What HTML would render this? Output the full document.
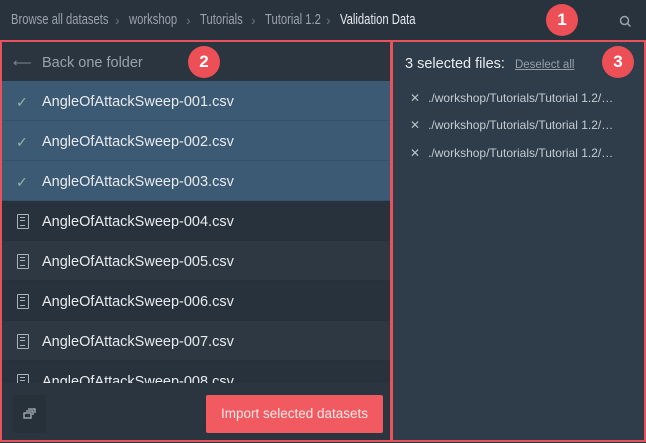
<!DOCTYPE html>
<html><head><meta charset="utf-8"><style>
*{margin:0;padding:0;box-sizing:border-box}
body{width:646px;height:443px;background:#2a343f;font-family:"Liberation Sans",sans-serif;position:relative;overflow:hidden}
.top{position:absolute;left:0;top:0;width:646px;height:40px;background:#29333e;color:#9aa3ac;font-size:15px;line-height:40px;white-space:nowrap}
.top span.t{position:absolute;top:0;transform:scaleX(0.75);transform-origin:left center}
.top .sep{position:absolute;top:0;color:#6c757e;font-size:14px}
.top .cur{color:#e6e9ec}
.badge{position:absolute;width:32px;height:32px;border-radius:50%;background:#ec4f55;color:#fff;font-weight:bold;font-size:17px;text-align:center;line-height:32px}
.left{position:absolute;left:0;top:40px;width:392px;height:402px;border:2px solid #e8525a;background:#2b3540;overflow:hidden}
.right{position:absolute;left:391px;top:40px;width:255px;height:402px;border:2px solid #e8525a;background:#2f3d4a}
.row{height:40px;line-height:42px;font-size:14.5px;color:#e8ebee;padding-left:40px;position:relative;border-bottom:1px solid #26303a}
.row.sel{background:#3c5a73;border-bottom:1px solid #34506a}
.row.d{background:#28323c}
.row.l{background:#2d3843}
.ic{position:absolute;left:15px;top:13px;width:12px;height:15px;border:1.5px solid #aab2ba;border-radius:1px}
.ic:before{content:"";position:absolute;left:2px;top:2px;width:5px;height:7px;border-top:1.5px solid #aab2ba;border-bottom:1.5px solid #aab2ba}
.ic:after{content:"";position:absolute;left:2px;top:5px;width:5px;height:0;border-top:1.5px solid #aab2ba}
.chk{position:absolute;left:14px;top:0;color:#8fb8a6;font-size:14px}
.foot{position:absolute;left:0;top:341px;width:388px;height:59px;background:#2b3540}
.btn{position:absolute;left:204px;top:12px;width:177px;height:38px;background:#f05a60;color:#fbe9ea;font-size:13.5px;text-align:center;line-height:38px;border-radius:2px}
.sq{position:absolute;left:11px;top:12px;width:33px;height:38px;background:#27313a;color:#aab2ba}
.sel-h{color:#e8ebee;font-size:14.5px;position:absolute;left:12px;top:14px}
.sel-h u{color:#97a0a9;font-size:11.5px;margin-left:6px}
.f{position:absolute;left:17px;font-size:12px;color:#c5ccd2;white-space:nowrap}
.f b{font-weight:normal;color:#b8c0c7;margin-right:8px}
</style></head><body>
<div class="top">
<span class="t" style="left:11px">Browse all datasets</span><span class="sep" style="left:115px">›</span>
<span class="t" style="left:129px">workshop</span><span class="sep" style="left:186px">›</span>
<span class="t" style="left:200px">Tutorials</span><span class="sep" style="left:251px">›</span>
<span class="t" style="left:265px">Tutorial 1.2</span><span class="sep" style="left:326px">›</span>
<span class="t cur" style="left:340px">Validation Data</span>
<svg style="position:absolute;left:619px;top:15px" width="13" height="13" viewBox="0 0 13 13"><circle cx="5.5" cy="5.5" r="4" fill="none" stroke="#9aa3ac" stroke-width="1.5"/><path d="M8.5 8.5L11.5 11.5" stroke="#9aa3ac" stroke-width="1.5"/></svg></div>
<div class="badge" style="left:546px;top:4px">1</div>
<div class="left">
<div class="row" style="color:#99a2ab;height:39px;line-height:42px;border-bottom:none"><span style="position:absolute;left:11px;top:0;font-size:13px;color:#7d8791">⟵</span>Back one folder</div>
<div class="row sel"><span class="chk">✓</span>AngleOfAttackSweep-001.csv</div>
<div class="row sel"><span class="chk">✓</span>AngleOfAttackSweep-002.csv</div>
<div class="row sel"><span class="chk">✓</span>AngleOfAttackSweep-003.csv</div>
<div class="row d"><span class="ic"></span>AngleOfAttackSweep-004.csv</div>
<div class="row l"><span class="ic"></span>AngleOfAttackSweep-005.csv</div>
<div class="row d"><span class="ic"></span>AngleOfAttackSweep-006.csv</div>
<div class="row l"><span class="ic"></span>AngleOfAttackSweep-007.csv</div>
<div class="row d"><span class="ic"></span>AngleOfAttackSweep-008.csv</div>
<div class="foot"><div class="sq"><svg style="position:absolute;left:10px;top:12px" width="13" height="13" viewBox="0 0 13 13" fill="none" stroke="#aab2ba" stroke-width="1.3"><rect x="1" y="6" width="7" height="5"/><path d="M3 4H10V8M5 2H12V6"/></svg></div><div class="btn">Import selected datasets</div></div>
</div>
<div class="badge" style="left:188px;top:46px">2</div>
<div class="right">
<div class="sel-h">3 selected files: <u>Deselect all</u></div>
<div class="f" style="top:49px"><b>✕</b>./workshop/Tutorials/Tutorial 1.2/…</div>
<div class="f" style="top:76px"><b>✕</b>./workshop/Tutorials/Tutorial 1.2/…</div>
<div class="f" style="top:104px"><b>✕</b>./workshop/Tutorials/Tutorial 1.2/…</div>
</div>
<div class="badge" style="left:602px;top:46px">3</div>
</body></html>
